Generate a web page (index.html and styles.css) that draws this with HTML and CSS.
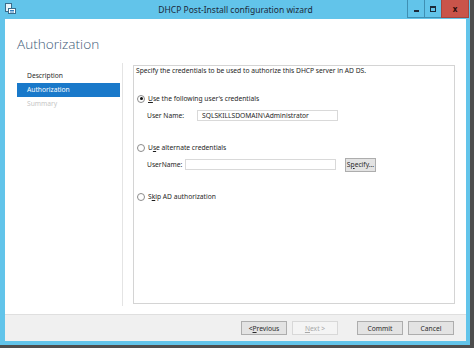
FILE: index.html
```html
<!doctype html>
<html lang="en">

<head>
  <meta charset="utf-8" />
  <title>DHCP Post-Install configuration wizard</title>
  <link rel="stylesheet" href="styles.css">
</head>

<body>
  <div class="window">
    <div class="titlebar">
      <svg class="app-icon" width="11" height="11" viewBox="0 0 11 11">
        <rect x="0.5" y="0.5" width="6" height="8" fill="#e8f4fb" stroke="#3a6d8c" />
        <rect x="3.5" y="5.5" width="7" height="5" fill="#ffffff" stroke="#3a6d8c" />
        <line x1="5" y1="7.5" x2="9" y2="7.5" stroke="#2f7fc0" />
        <line x1="5" y1="9" x2="9" y2="9" stroke="#2f7fc0" />
      </svg>
      <span class="title">DHCP Post-Install configuration wizard</span>
      <div class="caption-buttons">
        <span class="cap-btn"><i class="min-glyph"></i></span>
        <span class="cap-btn"><i class="max-glyph"></i></span>
        <span class="cap-btn close">x</span>
      </div>
    </div>

    <div class="client">
      <div class="header">
        <h1>Authorization</h1>
      </div>

      <div class="main">
        <ul class="nav">
          <li>Description</li>
          <li class="active">Authorization</li>
          <li class="disabled">Summary</li>
        </ul>

        <div class="panel">
          <p class="intro">Specify the credentials to be used to authorize this DHCP server in AD DS.</p>

          <div class="option first">
            <span class="radio checked"></span>
            <span><u>U</u>se the following user's credentials</span>
          </div>
          <div class="field">
            <span class="label">User Name:</span>
            <span class="input wide">SQLSKILLSDOMAIN\Administrator</span>
          </div>

          <div class="option">
            <span class="radio"></span>
            <span>U<u>s</u>e alternate credentials</span>
          </div>
          <div class="field">
            <span class="label short">UserName:</span>
            <span class="input narrow"></span>
            <span class="btn small">S<u>p</u>ecify...</span>
          </div>

          <div class="option">
            <span class="radio"></span>
            <span>S<u>k</u>ip AD authorization</span>
          </div>
        </div>
      </div>

      <div class="footer">
        <span class="btn">&lt; <u>P</u>revious</span>
        <span class="btn disabled"><u>N</u>ext &gt;</span>
        <span class="btn gap">Commit</span>
        <span class="btn">Cancel</span>
      </div>
    </div>
  </div>
</body>

</html>
```

FILE: styles.css
```css
:root {
  --frame: #62c4ea;
  --text: #1e1e1e;
  --select: #1979ca;
}

body {
  margin: 0;
  background: #4e4e4e;
  font-family: "Noto Sans", "Open Sans", sans-serif;
  font-size: 6.7px;
  color: var(--text);
}

.window {
  width: 470px;
  height: 345px;
  background: var(--frame);
  padding: 0 4px 4px 5px;
  box-sizing: border-box;
  display: flex;
  flex-direction: column;
}

.titlebar {
  height: 19px;
  display: flex;
  align-items: flex-start;
  position: relative;
}

.app-icon {
  margin: 3px 0 0 0;
}

.title {
  position: absolute;
  left: 0;
  right: 0;
  top: 4px;
  text-align: center;
  font-size: 8.5px;
  color: #1b2a3a;
}

.caption-buttons {
  margin-left: auto;
  margin-right: -3px;
  display: flex;
  position: relative;
  z-index: 1;
}

.cap-btn {
  width: 16px;
  height: 17px;
  border: 1px solid #3f8fb3;
  border-top: none;
  margin-left: -1px;
  display: flex;
  align-items: center;
  justify-content: center;
  box-sizing: content-box;
}

.cap-btn.close {
  width: 26px;
  background: #c9544a;
  border-color: #a4463f;
  color: #2a0c0a;
  font-weight: bold;
  font-size: 8px;
  line-height: 1;
}

.min-glyph {
  width: 5px;
  height: 2px;
  background: #1b2a3a;
  margin-top: 4px;
}

.max-glyph {
  width: 4px;
  height: 3px;
  border: 1px solid #1b2a3a;
  border-top-width: 2px;
}

.client {
  flex: 1;
  background: #ffffff;
  display: flex;
  flex-direction: column;
}

.header {
  height: 38px;
  display: flex;
  align-items: flex-end;
  padding-left: 12px;
}

.header h1 {
  margin: 0 0 4px;
  font-family: "Open Sans", "Noto Sans", sans-serif;
  font-weight: 300;
  font-size: 13.6px;
  color: #3d5b78;
}

.main {
  flex: 1;
  display: flex;
}

.nav {
  list-style: none;
  margin: 6px 0 8px;
  padding: 6px 2px 0 12px;
  width: 103px;
  border-right: 1px solid #e4e4e4;
}

.nav li {
  height: 14px;
  line-height: 14px;
  padding-left: 10px;
  color: #2a2a2a;
}

.nav li.active {
  background: var(--select);
  color: #ffffff;
}

.nav li.disabled {
  color: #c6c6c6;
}

.panel {
  flex: 1;
  margin: 8px 11px 10px 10px;
  border: 1px solid #d4d4d4;
  padding: 0 2px;
}

.intro {
  margin: 0 0 18px;
  line-height: 9px;
}

.option {
  display: flex;
  align-items: center;
  gap: 3px;
  height: 11px;
  margin-top: 20px;
}

.option.first {
  margin-top: 0;
}

.radio {
  width: 6px;
  height: 6px;
  border: 1px solid #8c8c8c;
  border-radius: 50%;
  background: #ffffff;
  margin-left: 1px;
  display: flex;
  align-items: center;
  justify-content: center;
}

.radio.checked::after {
  content: "";
  width: 3px;
  height: 3px;
  border-radius: 50%;
  background: #111111;
}

.field {
  display: flex;
  align-items: center;
  padding-left: 11px;
  margin-top: 5px;
  height: 13px;
}

.label {
  width: 50px;
  flex: none;
}

.label.short {
  width: 38px;
}

.input {
  height: 11px;
  border: 1px solid #d9d9d9;
  box-sizing: border-box;
  padding-left: 4px;
  line-height: 10px;
}

.input.wide {
  width: 141px;
}

.input.narrow {
  width: 151px;
}

.btn {
  width: 46px;
  height: 14px;
  box-sizing: border-box;
  border: 1px solid #adadad;
  background: #e3e3e3;
  display: flex;
  align-items: center;
  justify-content: center;
  color: #2a2a2a;
}

.btn.small {
  width: 31px;
  margin-left: 9px;
}

.btn.disabled {
  background: #f4f4f4;
  border-color: #d8d8d8;
  color: #a8a8a8;
}

.footer {
  height: 27px;
  background: #f0f0f0;
  border-top: 1px solid #dfdfdf;
  box-sizing: border-box;
  display: flex;
  align-items: center;
  justify-content: flex-end;
  gap: 5px;
  padding-right: 12px;
}

.btn.gap {
  margin-left: 14px;
}
```
